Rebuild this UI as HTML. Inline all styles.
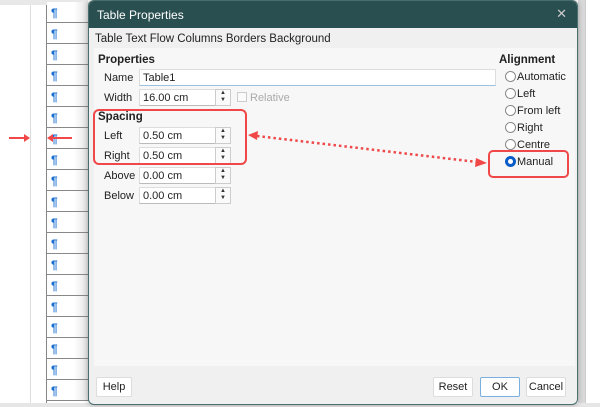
<!DOCTYPE html>
<html><head><style>
*{margin:0;padding:0;box-sizing:border-box}
body{width:600px;height:407px;overflow:hidden;background:#fff;font-family:"Liberation Sans",sans-serif;font-size:11px;color:#222;position:relative}
.abs{position:absolute}
.row{position:absolute;left:47px;width:45px;height:21px;border-bottom:1px solid #888;background:linear-gradient(90deg,#fff 60%,#ddd)}
.pil{position:absolute;left:51px;color:#1a6fd0;font-size:12px;font-weight:bold}
.lbl{position:absolute;left:104px;font-size:11px}
.inp{position:absolute;left:139px;height:17px;background:#fff;border:1px solid #ddd;border-bottom:1px solid #bbb;padding:2px 3px;font-size:11px}
.spin{position:absolute;left:215px;width:16px;height:17px;border:1px solid #ccc;background:#fafafa;font-size:6px;line-height:7px;text-align:center;color:#333}
.rad{position:absolute;left:505px;font-size:11px}
.rad i{display:inline-block;width:11px;height:11px;border:1px solid #888;border-radius:50%;vertical-align:-2px;margin-right:1px;background:#fff}
.btn{position:absolute;top:377px;height:20px;border:1px solid #ddd;background:#fff;font-size:11px;text-align:center;line-height:18px;border-radius:2px}
</style></head><body>
<div class="abs" style="left:0;top:0;width:88px;height:5px;background:#e8e8e8"></div>
<div class="abs" style="left:30px;top:5px;width:1px;height:402px;background:#ddd"></div>
<div class="abs" style="left:46px;top:5px;width:1px;height:402px;background:#888"></div>
<div class="abs" style="left:585px;top:0;width:15px;height:407px;background:#fff;border-left:1px solid #ccc"></div>
<div class="abs" style="left:578px;top:0;width:7px;height:407px;background:#d9d9d9"></div>
<div class="abs" style="left:0;top:403px;width:600px;height:4px;background:#e6e6e6"></div>
<div class="row" style="top:2px"></div><div class="row" style="top:23px"></div><div class="row" style="top:44px"></div><div class="row" style="top:65px"></div><div class="row" style="top:86px"></div><div class="row" style="top:107px"></div><div class="row" style="top:128px"></div><div class="row" style="top:149px"></div><div class="row" style="top:170px"></div><div class="row" style="top:191px"></div><div class="row" style="top:212px"></div><div class="row" style="top:233px"></div><div class="row" style="top:254px"></div><div class="row" style="top:275px"></div><div class="row" style="top:296px"></div><div class="row" style="top:317px"></div><div class="row" style="top:338px"></div><div class="row" style="top:359px"></div><div class="row" style="top:380px"></div>
<div class="pil" style="top:6px">¶</div><div class="pil" style="top:27px">¶</div><div class="pil" style="top:48px">¶</div><div class="pil" style="top:69px">¶</div><div class="pil" style="top:90px">¶</div><div class="pil" style="top:111px">¶</div><div class="pil" style="top:132px">¶</div><div class="pil" style="top:153px">¶</div><div class="pil" style="top:174px">¶</div><div class="pil" style="top:195px">¶</div><div class="pil" style="top:216px">¶</div><div class="pil" style="top:237px">¶</div><div class="pil" style="top:258px">¶</div><div class="pil" style="top:279px">¶</div><div class="pil" style="top:300px">¶</div><div class="pil" style="top:321px">¶</div><div class="pil" style="top:342px">¶</div><div class="pil" style="top:363px">¶</div><div class="pil" style="top:384px">¶</div>
<svg class="abs" style="left:0;top:128px" width="80" height="20"><g stroke="#f04848" stroke-width="2" fill="#f04848"><line x1="9" y1="10" x2="26" y2="10"/><polygon points="30,10 24,6 24,14" stroke="none"/><line x1="52" y1="10" x2="72" y2="10"/><polygon points="47,10 53,6 53,14" stroke="none"/></g></svg>
<div class="abs" style="left:88px;top:0;width:490px;height:405px;background:#f0f0f0;border:1px solid #4a6e6e;border-radius:6px;overflow:hidden;box-shadow:0 0 6px rgba(0,0,0,.3)">
<div style="height:27px;background:#2a4f50;color:#fff;font-size:12px;padding:7px 0 0 8px">Table Properties<span style="position:absolute;right:10px;top:5px;font-size:13px;color:#ccc">✕</span></div>
</div>
<div class="abs" style="left:95px;top:33px;font-size:11.5px">Table Text Flow Columns Borders Background</div>
<div class="abs" style="left:94px;top:48px;width:481px;height:318px;background:#f7f7f7"></div>
<div class="abs" style="left:98px;top:54px;font-weight:bold;font-size:11.5px">Properties</div>
<div class="lbl" style="top:72px">Name</div>
<div class="inp" style="top:69px;width:357px;border-bottom:1px solid #9cc0e0">Table1</div>
<div class="lbl" style="top:92px">Width</div>
<div class="inp" style="top:89px;width:77px">16.00 cm</div><div class="spin" style="top:89px">▲<br>▼</div>
<div class="abs" style="left:237px;top:92px;width:10px;height:10px;border:1px solid #ccc;background:#fafafa"></div>
<div class="abs" style="left:250px;top:92px;color:#aaa">Relative</div>
<div class="abs" style="left:98px;top:111px;font-weight:bold;font-size:11.5px">Spacing</div>
<div class="lbl" style="top:130px">Left</div>
<div class="inp" style="top:127px;width:77px">0.50 cm</div><div class="spin" style="top:127px">▲<br>▼</div>
<div class="lbl" style="top:150px">Right</div>
<div class="inp" style="top:147px;width:77px">0.50 cm</div><div class="spin" style="top:147px">▲<br>▼</div>
<div class="lbl" style="top:170px">Above</div>
<div class="inp" style="top:167px;width:77px">0.00 cm</div><div class="spin" style="top:167px">▲<br>▼</div>
<div class="lbl" style="top:190px">Below</div>
<div class="inp" style="top:187px;width:77px">0.00 cm</div><div class="spin" style="top:187px">▲<br>▼</div>
<div class="abs" style="left:93px;top:109px;width:154px;height:56px;border:2px solid #f04848;border-radius:6px"></div>
<div class="abs" style="left:499px;top:54px;font-weight:bold;font-size:11.5px">Alignment</div>
<div class="rad" style="top:71px"><i></i>Automatic</div>
<div class="rad" style="top:88px"><i></i>Left</div>
<div class="rad" style="top:105px"><i></i>From left</div>
<div class="rad" style="top:122px"><i></i>Right</div>
<div class="rad" style="top:139px"><i></i>Centre</div>
<div class="rad" style="top:156px"><i style="border:3px solid #0a5cc8"></i>Manual</div>
<div class="abs" style="left:488px;top:150px;width:81px;height:28px;border:2px solid #f04848;border-radius:5px"></div>
<svg class="abs" style="left:245px;top:128px" width="245" height="40"><g stroke="#f04848" stroke-width="2.5" stroke-dasharray="2.5 3" fill="none"><line x1="12" y1="8" x2="232" y2="34"/></g><polygon points="3,7 13,3 12,12" fill="#f04848"/><polygon points="242,35 231,30 230,39" fill="#f04848"/></svg>
<div class="btn" style="left:96px;width:36px">Help</div>
<div class="btn" style="left:433px;width:40px">Reset</div>
<div class="btn" style="left:480px;width:40px;border-color:#7ab0e0">OK</div>
<div class="btn" style="left:526px;width:40px">Cancel</div>
</body></html>
